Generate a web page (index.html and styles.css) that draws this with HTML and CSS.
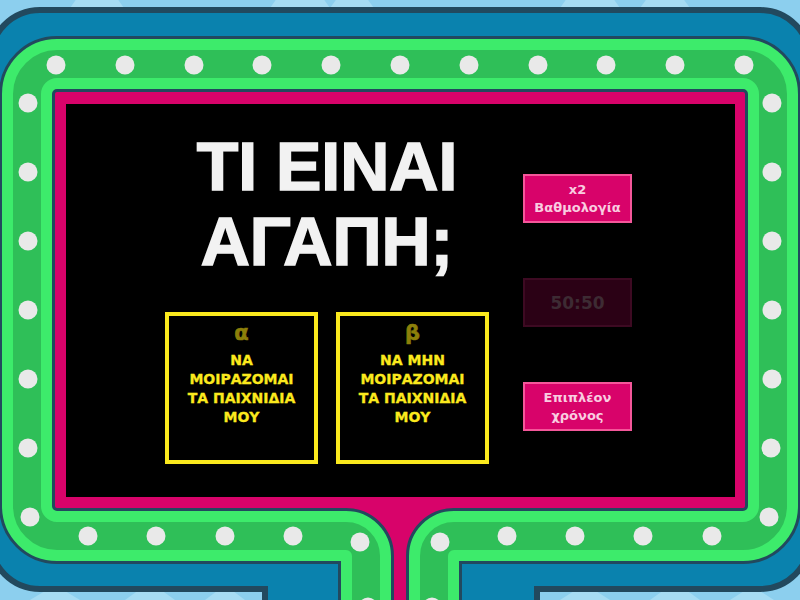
FILE: index.html
```html
<!DOCTYPE html>
<html lang="el">
<head>
<meta charset="utf-8">
<title>ΤΙ ΕΙΝΑΙ ΑΓΑΠΗ;</title>
<link rel="stylesheet" href="styles.css">
</head>
<body>
<div class="stage">
  <svg class="frame" width="800" height="600" viewBox="0 0 800 600" aria-hidden="true">
    <rect x="0" y="0" width="800" height="600" fill="#8ccfee"/>
    <g fill="#a6dcf3">
      <polygon points="70,8 97,-30 124,8"/>
      <polygon points="270,8 300,-34 330,8"/>
      <polygon points="330,8 352,-22 374,8"/>
      <polygon points="560,8 590,-34 620,8"/>
      <polygon points="640,8 665,-26 690,8"/>
      <polygon points="30,600 55,585 80,600"/>
      <polygon points="125,600 150,582 175,600"/>
      <polygon points="205,600 225,585 245,600"/>
      <polygon points="560,600 585,584 610,600"/>
      <polygon points="650,600 675,582 700,600"/>
      <polygon points="730,600 752,586 774,600"/>
    </g>
    <path d="M-10,60 A50,50 0 0 1 40,10 L760,10 A50,50 0 0 1 810,60 L810,539 A50,50 0 0 1 760,589 L537,589 L537,640 L265,640 L265,589 L40,589 A50,50 0 0 1 -10,539 Z" fill="#0a82ae" stroke="#22495e" stroke-width="6"/>
    <rect x="50" y="89" width="700" height="423" rx="6" fill="#d8036a"/>
    <rect x="340" y="500" width="120" height="45" fill="#d8036a"/>
    <rect x="380" y="500" width="40" height="120" fill="#d8036a"/>
    <g fill="none" stroke-linejoin="round">
      <path d="M366,640 L366,556 A20,20 0 0 0 346,536 L57,536 A30,30 0 0 1 27,506 L27,94 A30,30 0 0 1 57,64 L743,64 A30,30 0 0 1 773,94 L773,506 A30,30 0 0 1 743,536 L454,536 A20,20 0 0 0 434,556 L434,640" stroke="#22495e" stroke-width="56"/>
      <path d="M366,640 L366,556 A20,20 0 0 0 346,536 L57,536 A30,30 0 0 1 27,506 L27,94 A30,30 0 0 1 57,64 L743,64 A30,30 0 0 1 773,94 L773,506 A30,30 0 0 1 743,536 L454,536 A20,20 0 0 0 434,556 L434,640" stroke="#3deb6b" stroke-width="50"/>
      <path d="M366,640 L366,556 A20,20 0 0 0 346,536 L57,536 A30,30 0 0 1 27,506 L27,94 A30,30 0 0 1 57,64 L743,64 A30,30 0 0 1 773,94 L773,506 A30,30 0 0 1 743,536 L454,536 A20,20 0 0 0 434,556 L434,640" stroke="#2fbf58" stroke-width="28"/>
    </g>
    <g fill="#e9e9e9">
      <circle cx="56" cy="65" r="9.5"/>
      <circle cx="125" cy="65" r="9.5"/>
      <circle cx="194" cy="65" r="9.5"/>
      <circle cx="262" cy="65" r="9.5"/>
      <circle cx="331" cy="65" r="9.5"/>
      <circle cx="400" cy="65" r="9.5"/>
      <circle cx="469" cy="65" r="9.5"/>
      <circle cx="538" cy="65" r="9.5"/>
      <circle cx="606" cy="65" r="9.5"/>
      <circle cx="675" cy="65" r="9.5"/>
      <circle cx="744" cy="65" r="9.5"/>
      <circle cx="28" cy="103" r="9.5"/>
      <circle cx="28" cy="172" r="9.5"/>
      <circle cx="28" cy="241" r="9.5"/>
      <circle cx="28" cy="310" r="9.5"/>
      <circle cx="28" cy="379" r="9.5"/>
      <circle cx="28" cy="448" r="9.5"/>
      <circle cx="30" cy="517" r="9.5"/>
      <circle cx="772" cy="103" r="9.5"/>
      <circle cx="772" cy="172" r="9.5"/>
      <circle cx="772" cy="241" r="9.5"/>
      <circle cx="772" cy="310" r="9.5"/>
      <circle cx="772" cy="379" r="9.5"/>
      <circle cx="771" cy="448" r="9.5"/>
      <circle cx="769" cy="517" r="9.5"/>
      <circle cx="88" cy="536" r="9.5"/>
      <circle cx="156" cy="536" r="9.5"/>
      <circle cx="225" cy="536" r="9.5"/>
      <circle cx="293" cy="536" r="9.5"/>
      <circle cx="360" cy="542" r="9.5"/>
      <circle cx="368" cy="607" r="9.5"/>
      <circle cx="440" cy="542" r="9.5"/>
      <circle cx="507" cy="536" r="9.5"/>
      <circle cx="575" cy="536" r="9.5"/>
      <circle cx="643" cy="536" r="9.5"/>
      <circle cx="712" cy="536" r="9.5"/>
      <circle cx="432" cy="607" r="9.5"/>
    </g>
  </svg>

  <div class="screen">
    <div class="main">
      <h1 class="question">ΤΙ ΕΙΝΑΙ<br>ΑΓΑΠΗ;</h1>
      <div class="answers">
        <div class="answer">
          <span class="letter">α</span>
          <span class="text">ΝΑ<br>ΜΟΙΡΑΖΟΜΑΙ<br>ΤΑ ΠΑΙΧΝΙΔΙΑ<br>ΜΟΥ</span>
        </div>
        <div class="answer">
          <span class="letter">β</span>
          <span class="text">ΝΑ ΜΗΝ<br>ΜΟΙΡΑΖΟΜΑΙ<br>ΤΑ ΠΑΙΧΝΙΔΙΑ<br>ΜΟΥ</span>
        </div>
      </div>
    </div>
    <div class="powerups">
      <div class="power">x2<br>Βαθμολογία</div>
      <div class="power off">50:50</div>
      <div class="power">Επιπλέον<br>χρόνος</div>
    </div>
  </div>
</div>
</body>
</html>
```

FILE: styles.css
```css
html, body {
  margin: 0;
  padding: 0;
  background: #8ccfee;
}

.stage {
  display: grid;
  width: 800px;
  height: 600px;
  overflow: hidden;
}

.frame,
.screen {
  grid-area: 1 / 1;
}

.frame {
  display: block;
}

.screen {
  margin: 104px 65px 103px 66px;
  background: #000;
  display: flex;
  padding-left: 71px;
  position: relative;
}

.main {
  width: 380px;
  display: flex;
  flex-direction: column;
  align-items: center;
  padding-top: 25px;
}

.question {
  margin: 0;
  font-family: "Liberation Sans", Arial, sans-serif;
  font-weight: bold;
  font-size: 68px;
  line-height: 75px;
  color: #f2f2f2;
  -webkit-text-stroke: 1.6px #f2f2f2;
  text-align: center;
  white-space: nowrap;
}

.answers {
  display: flex;
  gap: 18px;
  margin-top: 33px;
}

.answer {
  width: 153px;
  height: 152px;
  box-sizing: border-box;
  border: 4px solid #fbe91d;
  display: flex;
  flex-direction: column;
  align-items: center;
  padding-top: 5px;
}

.letter {
  font-family: "DejaVu Sans", sans-serif;
  font-weight: bold;
  font-size: 21px;
  line-height: 24px;
  color: #8c7f0a;
  -webkit-text-stroke: 0.6px #8c7f0a;
}

.text {
  margin-top: 6px;
  font-family: "DejaVu Sans", sans-serif;
  font-weight: bold;
  font-size: 14px;
  line-height: 19px;
  color: #fbe91d;
  -webkit-text-stroke: 0.3px #fbe91d;
  text-align: center;
  white-space: nowrap;
}

.powerups {
  display: flex;
  flex-direction: column;
  gap: 55px;
  padding-top: 70px;
  margin-left: 6px;
}

.power {
  width: 109px;
  height: 49px;
  box-sizing: border-box;
  border: 2px solid #f4579a;
  background: #d8036a;
  color: #f9cde0;
  font-family: "DejaVu Sans", sans-serif;
  font-weight: bold;
  font-size: 13px;
  line-height: 18px;
  display: flex;
  align-items: center;
  justify-content: center;
  text-align: center;
}

.power.off {
  background: #2b0115;
  border-color: #3d0a22;
  color: #3d2b33;
  font-size: 17px;
}
```
